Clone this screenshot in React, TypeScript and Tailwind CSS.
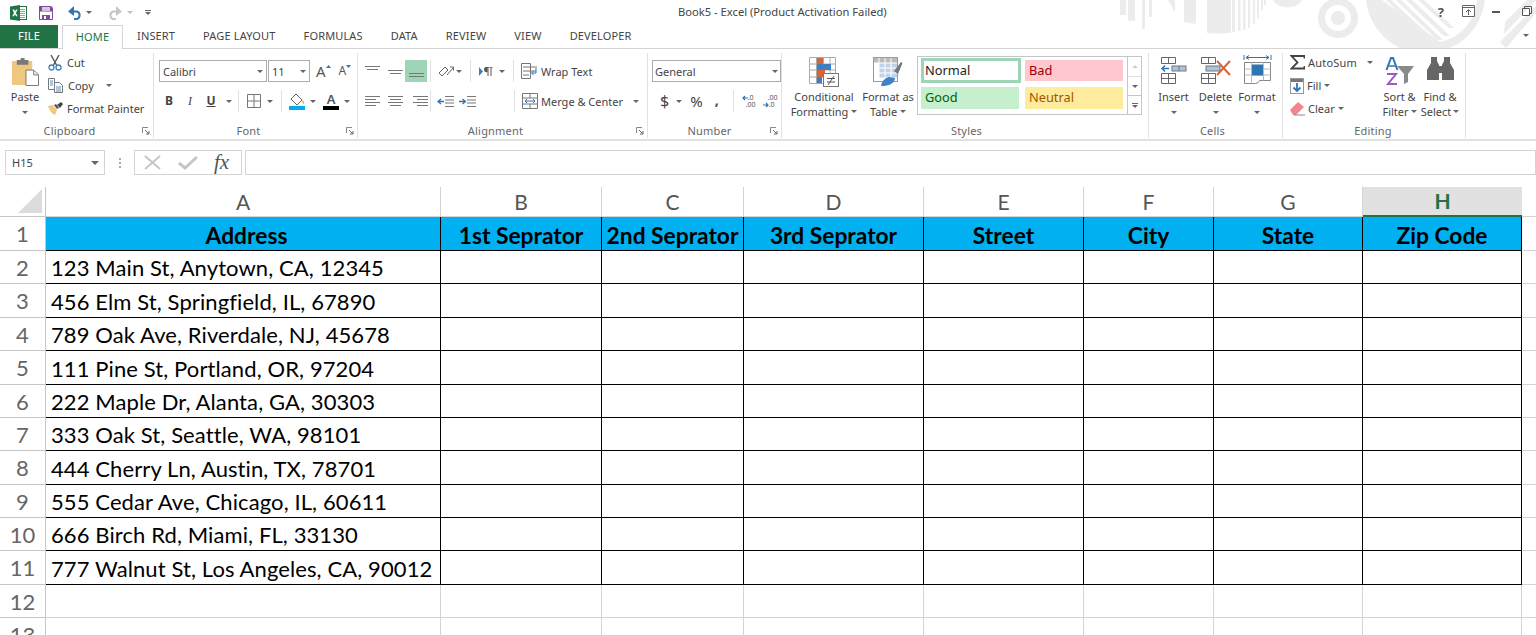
import type { ReactNode } from 'react';

const Caret = ({ className = '' }: { className?: string }) => (
  <svg viewBox="0 0 6 3" className={`w-[6px] h-[3px] shrink-0 ${className}`}>
    <path d="M0 0h6L3 3z" fill="#666" />
  </svg>
);

const Launcher = () => (
  <svg viewBox="0 0 8 8" className="w-[8px] h-[8px] absolute right-[3px] bottom-[3px]">
    <path d="M.5 6V.5H6" fill="none" stroke="#888" />
    <path d="M3 3l4 4M7 4v3H4" fill="none" stroke="#666" />
  </svg>
);

const Sep = () => <div className="w-px h-[22px] bg-[#e1e1e1] shrink-0" />;

const Group = ({ label, width, labelClass = '', launcher, children }: { label: string; width: string; labelClass?: string; launcher?: boolean; children: ReactNode }) => (
  <div className={`relative flex flex-col shrink-0 h-[85px] mt-[4px] border-r border-[#e1e1e1] ${width}`}>
    <div className="flex-1 min-h-0">{children}</div>
    <div className={`text-center text-[11px] leading-[14px] text-[#666] h-[14px] tracking-[0.2px] ${labelClass}`}>{label}</div>
    {launcher && <Launcher />}
  </div>
);

const ExcelLogo = () => (
  <svg viewBox="0 0 17 16" className="w-[17px] h-[16px]">
    <rect x="7" y="1.5" width="9.5" height="13" fill="#fff" stroke="#217346" />
    <path d="M9 4.5h6M9 6.5h6M9 8.5h6M9 10.5h6M9 12.5h6" stroke="#7fb595" />
    <path d="M0 1.5L10 0v16L0 14.5z" fill="#217346" />
    <path d="M2.5 4.5l1.4 3.4-1.6 3.4h1.6L5 9.2l1 2.1h1.7L5.9 7.9l1.7-3.4H6L5 6.6 4.2 4.5z" fill="#fff" />
  </svg>
);

const SaveIcon = () => (
  <svg viewBox="0 0 14 14" className="w-[14px] h-[14px]">
    <path d="M.5.5h11l2 2v11H.5z" fill="#fff" stroke="#7c4a9e" />
    <path d="M.5.5h13v5H.5z M3 1v3.5h8V1" fill="#7c4a9e" />
    <rect x="3" y="1" width="8" height="3.5" fill="#d9c8e5" />
    <rect x="3" y="9" width="8" height="5" fill="#7c4a9e" />
    <rect x="5" y="10" width="2" height="3" fill="#fff" />
  </svg>
);

const Undo = ({ color, flip }: { color: string; flip?: boolean }) => (
  <svg viewBox="0 0 15 14" className={`w-[15px] h-[14px] ${flip ? '-scale-x-100' : ''}`}>
    <path d="M2 5.500h7a4 4 0 0 1 0 7.500H6" fill="none" stroke={color} strokeWidth="2" />
    <path d="M6 0v10L0 5.500z" fill={color} />
  </svg>
);

const Pattern = () => (
  <svg viewBox="0 0 426 48" className="absolute left-[1110px] top-0 w-[426px] h-[48px]">
    <g fill="#ececec">
      <path d="M10 0h6v15h-6zM18 0h7v21h-7zM32 0h3v29h-3zM39 0h3v17h-3zM58 0h7v12zM74 0h12v24l-12-2zM97 0h21v33q-10 1-21 0zM118 0h3v33h-3z" />
      <path d="M122 0h3v32h-3zM128 0h2.500v31H128zM133 0h2.500v30H133zM138 0h2v28h-2zM143 0h2v24h-2zM147 0h2v18h-2zM151 0h2v10h-2zM154 0h2v5h-2z" />
      <path d="M163 0h29a15 10 0 0 1-29 0z" />
      <circle cx="228" cy="18" r="20" />
      <path d="M256 0a60 60 0 0 0 34 48h50a60 60 0 0 0 35-48h-8a46 46 0 0 1-37 42L272 0z" />
      <path d="M276 0h5l46 42h-8zM286 0h5l42 40h-6zM296 0h6l38 36h-6zM308 0h6l30 28h-5z" />
      <path d="M395 22l22-22h9L394 34zM390 42l36-36v7l-30 35z" />
    </g>
    <circle cx="228" cy="18" r="13" fill="#fff" />
    <circle cx="228" cy="18" r="7" fill="#ececec" />
  </svg>
);

const Cut = () => (
  <svg viewBox="0 0 14 16" className="w-[14px] h-[16px]">
    <path d="M3 0l5.500 10M11 0L5.500 10" stroke="#555" strokeWidth="1.400" fill="none" />
    <circle cx="3.500" cy="12.500" r="2.500" fill="none" stroke="#3f7fbf" strokeWidth="1.300" />
    <circle cx="10.500" cy="12.500" r="2.500" fill="none" stroke="#3f7fbf" strokeWidth="1.300" />
  </svg>
);

const Copy = () => (
  <svg viewBox="0 0 15 15" className="w-[15px] h-[15px]">
    <path d="M.5.5h6v11h-6z" fill="#fff" stroke="#777" />
    <path d="M6.500 4.500h5l3 3v7h-8z" fill="#fff" stroke="#777" />
    <path d="M8 9h5M8 11h5M8 13h5M2 3h3M2 5h3M2 7h3" stroke="#5b8fc7" />
  </svg>
);

const Painter = () => (
  <svg viewBox="0 0 15 13" className="w-[15px] h-[13px]">
    <path d="M0 4l5-1 4 5-2 5q-4-1-7-9z" fill="#efc77e" />
    <path d="M6 3l2-1 3 4-2 1z" fill="#555" />
    <path d="M9 3l4-3 2 2-3 4z" fill="#444" />
  </svg>
);

const Paste = () => (
  <svg viewBox="0 0 28 29" className="w-[27px] h-[28px]">
    <rect x="0" y="3" width="21" height="25" rx="1" fill="#efc77e" />
    <rect x="5" y="2" width="12" height="5" fill="#7a7a7a" />
    <rect x="9" y="0" width="4" height="3" fill="#7a7a7a" />
    <path d="M14.500 12.500h8l5 5v11h-13z" fill="#fff" stroke="#777" />
    <path d="M22.500 12.500v5h5" fill="none" stroke="#777" />
  </svg>
);

const Borders = () => (
  <svg viewBox="0 0 14 14" className="w-[14px] h-[14px]">
    <path d="M.5.5h13v13H.5zM7 .5v13M.5 7h13" fill="none" stroke="#777" />
  </svg>
);

const Fill = () => (
  <svg viewBox="0 0 16 17" className="w-[16px] h-[17px]">
    <path d="M7 1l6 6-5 5-6-6z" fill="#fff" stroke="#666" />
    <path d="M13 7q3 2 2 4-2-1-2-4z" fill="#e3a21a" />
    <rect x="0" y="13" width="16" height="4" fill="#00aeef" />
  </svg>
);

const AlignLines = ({ lines }: { lines: string }) => (
  <svg viewBox="0 0 15 13" className="w-[15px] h-[13px]">
    <path d={lines} stroke="#777" fill="none" />
  </svg>
);

const Orient = () => (
  <svg viewBox="0 0 16 14" className="w-[16px] h-[14px]">
    <path d="M1 9l6-6 3 3-6 6z" fill="none" stroke="#666" />
    <path d="M9 11l6-7M12 3h3.500v3.500" fill="none" stroke="#666" />
  </svg>
);

const Rtl = () => (
  <svg viewBox="0 0 15 9" className="w-[15px] h-[9px]">
    <path d="M0 0l4 4.500L0 9z" fill="#3f7fbf" />
    <path d="M6 0h8M8 0a2.500 2.500 0 0 0 0 5zM9 0v9M12 0v9" stroke="#555" fill="#555" />
  </svg>
);

const Wrap = () => (
  <svg viewBox="0 0 17 16" className="w-[17px] h-[16px]">
    <path d="M.5.500h9v15h-9z" fill="#fff" stroke="#777" />
    <path d="M2 4h14M2 8h13M2 12h6" stroke="#777" />
    <path d="M15 5v5h-4M12.500 8l-2 2 2 2" fill="none" stroke="#2f75b5" />
  </svg>
);

const Merge = () => (
  <svg viewBox="0 0 16 16" className="w-[16px] h-[16px]">
    <path d="M.5.500h15v15H.5zM.5 5h15M.5 11h15M8 .5V5M8 11v5" fill="#fff" stroke="#777" />
    <path d="M3 8h10M5 6l-2 2 2 2M11 6l2 2-2 2" fill="none" stroke="#2f75b5" />
  </svg>
);

const Indent = ({ right }: { right?: boolean }) => (
  <svg viewBox="0 0 17 11" className="w-[17px] h-[11px]">
    <path d="M8 .5h9M8 4h9M8 7h9M8 10.500h9" stroke="#777" />
    <path d={right ? 'M0 5.500h6M3.500 3L6.500 5.500 3.500 8' : 'M1 5.500h6M4 3L1 5.500 4 8'} fill="none" stroke="#2f75b5" strokeWidth="1.300" />
  </svg>
);

const Arrow = ({ right }: { right?: boolean }) => (
  <svg viewBox="0 0 6 6" className="w-[6px] h-[6px] shrink-0">
    <path d={right ? 'M0 3h5M3 1l2 2-2 2' : 'M6 3H1M3 1L1 3l2 2'} fill="none" stroke="#2f75b5" strokeWidth="1.200" />
  </svg>
);

const CondFormat = () => (
  <svg viewBox="0 0 30 30" className="w-[30px] h-[30px]">
    <path d="M.5.500h26v26H.5zM7.500 .5v26M14.500 .5v26M21 .5v26M.5 7h26M.5 13h26M.5 20h26" fill="#fff" stroke="#aaa" />
    <rect x="8" y="1" width="6" height="6" fill="#d9643a" />
    <rect x="8" y="7" width="14" height="6" fill="#3f7fbf" />
    <rect x="8" y="13" width="8" height="7" fill="#d9643a" />
    <rect x="8" y="20" width="5" height="6" fill="#3f7fbf" />
    <rect x="14.500" y="16.500" width="15" height="13" fill="#fff" stroke="#777" />
    <path d="M18 21.500h8M18 25h8M25 19l-6 9" stroke="#555" fill="none" />
  </svg>
);

const TableFormat = () => (
  <svg viewBox="0 0 30 30" className="w-[30px] h-[30px]">
    <rect x=".5" y=".5" width="24" height="24" fill="#fff" stroke="#999" />
    <rect x="1" y="1" width="23" height="5" fill="#bbb" />
    <rect x="6" y="6" width="18" height="15" fill="#c0d2e8" />
    <path d="M6 1v23M12 1v23M18 1v23M1 6h23M1 11h23M1 16h23M1 21h23" stroke="#fff" />
    <path d="M21 14l7-9 1.500 1L25 17z" fill="#777" />
    <path d="M8 29q1-7 8-9l6 1q-1 8-14 8z" fill="#3f83c6" />
  </svg>
);

const InsertIcon = () => (
  <svg viewBox="0 0 27 27" className="w-[27px] h-[27px]">
    <path d="M1.500.5h14v6h-14zM8.500 .5v6M1.500 16.500h14v10h-14zM1.500 21.500h14M8.500 16.500v10" fill="#fff" stroke="#666" />
    <rect x="12" y="9" width="14" height="5" fill="#a7c4e3" stroke="#777" />
    <path d="M19 9v5" stroke="#777" />
    <path d="M2 11.500h7M5 8.500l-3 3 3 3" fill="none" stroke="#2f75b5" strokeWidth="1.500" />
  </svg>
);

const DeleteIcon = () => (
  <svg viewBox="0 0 31 27" className="w-[31px] h-[27px]">
    <path d="M1.500.5h14v6h-14zM8.500 .5v6M1.500 16.500h14v10h-14zM1.500 21.500h14M8.500 16.500v10" fill="#fff" stroke="#666" />
    <rect x="6" y="9" width="14" height="5" fill="#a7c4e3" stroke="#777" />
    <path d="M17 4l13 14M30 4L17 18" stroke="#d9643a" strokeWidth="2" fill="none" />
  </svg>
);

const FormatIcon = () => (
  <svg viewBox="0 0 29 32" className="w-[29px] h-[32px]">
    <path d="M1 1v5M28 1v5" stroke="#2f75b5" />
    <path d="M3 3.500h23M6 1.500L3 3.500l3 2M23 1.500l3 2-3 2" fill="none" stroke="#2f75b5" />
    <path d="M1.500 8.500h26v18h-11q-1 3-4 3h-11z" fill="#fff" stroke="#888" />
    <path d="M8.500 8.500v21M20.500 8.500v18M1.500 15h26M1.500 21h26" stroke="#bbb" />
    <rect x="9" y="10.500" width="11" height="11" fill="#2f75b5" />
  </svg>
);

const Sigma = () => (
  <svg viewBox="0 0 15 15" className="w-[15px] h-[15px]">
    <path d="M14.500 3.500V1H1.500l6 6.500-6 6h13V11" fill="none" stroke="#444" strokeWidth="1.800" />
  </svg>
);

const FillDown = () => (
  <svg viewBox="0 0 14 16" className="w-[14px] h-[16px]">
    <rect x=".5" y=".5" width="13" height="15" fill="#fff" stroke="#999" />
    <rect x="1" y="1" width="12" height="3" fill="#777" />
    <path d="M7 5v8M3.500 9.500L7 13l3.500-3.500" fill="none" stroke="#2f75b5" strokeWidth="1.800" />
  </svg>
);

const Eraser = () => (
  <svg viewBox="0 0 15 15" className="w-[15px] h-[15px]">
    <path d="M0 9l8-8 6 5-8 8H3z" fill="#f0868e" />
    <path d="M4 14h11" stroke="#888" />
  </svg>
);

const SortIcon = () => (
  <svg viewBox="0 0 30 29" className="w-[30px] h-[29px]">
    <path d="M1.500 13L6 1h2l4.500 12" fill="none" stroke="#2f75b5" strokeWidth="2" />
    <path d="M4 9h6" stroke="#2f75b5" strokeWidth="1.500" />
    <path d="M2 17h9L3 27h9" fill="none" stroke="#9b59c4" strokeWidth="2" />
    <path d="M12 9h17l-6 8v8l-4 2V17z" fill="#8a8a8a" />
  </svg>
);

const FindIcon = () => (
  <svg viewBox="0 0 27 25" className="w-[27px] h-[25px]">
    <path d="M4 0h6v4l2 4v15H0V13l4-7zM17 0h6v6l4 7v10H15V8l2-4zM12 9h3v7h-3z" fill="#666" />
  </svg>
);

const TextItem = ({ children, className = '' }: { children: ReactNode; className?: string }) => (
  <span className={`text-[11px] leading-[15px] text-[#444] whitespace-nowrap ${className}`}>{children}</span>
);

const Ribbon = () => (
  <div className="flex h-[92px] border-b-2 border-[#e1e1e1]">
    <Group label="Clipboard" width="w-[154px]" labelClass="pr-[14px]" launcher>
      <div className="flex">
        <div className="flex flex-col items-center w-[48px] pl-[2px] pt-[5px]">
          <Paste />
          <TextItem className="mt-[3px]">Paste</TextItem>
          <Caret className="mt-[7px]" />
        </div>
        <div className="flex flex-col -mt-[2px]">
          <div className="flex items-center h-[23px] gap-[5px]"><Cut /><TextItem>Cut</TextItem></div>
          <div className="flex items-center h-[23px] gap-[5px]"><Copy /><TextItem>Copy</TextItem><Caret className="ml-[7px]" /></div>
          <div className="flex items-center h-[23px] gap-[4px]"><Painter /><TextItem>Format Painter</TextItem></div>
        </div>
      </div>
    </Group>

    <Group label="Font" width="w-[204px]" labelClass="pr-[14px]" launcher>
      <div className="flex flex-col pl-[5px] pt-[7px]">
        <div className="flex items-center h-[22px]">
          <div className="flex items-center justify-between w-[108px] h-[22px] border border-[#ababab] px-[3px]"><TextItem>Calibri</TextItem><Caret /></div>
          <div className="flex items-center justify-between w-[42px] h-[22px] border border-[#ababab] ml-[1px] px-[3px]"><TextItem>11</TextItem><Caret /></div>
          <span className="ml-[6px] text-[15px] leading-[20px] text-[#555]">A</span>
          <svg viewBox="0 0 5 3" className="w-[5px] h-[3px] self-start mt-[5px]"><path d="M0 3l2.500-3L5 3z" fill="#2f75b5" /></svg>
          <span className="ml-[8px] text-[12px] leading-[20px] text-[#555]">A</span>
          <svg viewBox="0 0 5 3" className="w-[5px] h-[3px] self-start mt-[5px]"><path d="M0 0l2.500 3L5 0z" fill="#2f75b5" /></svg>
        </div>
        <div className="flex items-center h-[22px] mt-[8px]">
          <span className="w-[20px] text-center text-[12px] font-bold text-[#444]">B</span>
          <span className="w-[22px] text-center text-[12px] italic text-[#444] font-['Liberation_Serif',serif]">I</span>
          <span className="w-[20px] text-center text-[12px] font-bold underline text-[#444]">U</span>
          <Caret className="ml-[5px]" />
          <div className="ml-[6px]"><Sep /></div>
          <div className="ml-[8px]"><Borders /></div>
          <Caret className="ml-[6px]" />
          <div className="ml-[8px]"><Sep /></div>
          <div className="ml-[7px]"><Fill /></div>
          <Caret className="ml-[5px]" />
          <div className="relative ml-[7px] w-[16px] h-[17px] text-center">
            <span className="block text-[13px] leading-[13px] font-semibold text-[#555]">A</span>
            <div className="h-[4px] bg-black" />
          </div>
          <Caret className="ml-[5px]" />
        </div>
      </div>
    </Group>

    <Group label="Alignment" width="w-[290px]" labelClass="pr-[14px]" launcher>
      <div className="flex flex-col pl-[7px] pt-[7px]">
        <div className="flex items-center h-[22px]">
          <div className="w-[23px]"><AlignLines lines="M0 1.500h15M2 4.500h11" /></div>
          <div className="w-[17px]"><AlignLines lines="M0 5.500h15M2 8.500h11" /></div>
          <div className="flex items-center justify-center w-[22px] h-[22px] bg-[#9fd5b7] mr-[3px]"><AlignLines lines="M0 8.500h15M0 11.500h15" /></div>
          <Sep />
          <div className="ml-[7px]"><Orient /></div>
          <Caret className="ml-[2px]" />
          <div className="ml-[8px]"><Sep /></div>
          <div className="ml-[8px]"><Rtl /></div>
          <Caret className="ml-[5px]" />
          <div className="ml-[8px]"><Sep /></div>
          <div className="flex items-center gap-[3px] ml-[7px]"><Wrap /><TextItem>Wrap Text</TextItem></div>
        </div>
        <div className="flex items-center h-[22px] mt-[8px]">
          <div className="w-[23px]"><AlignLines lines="M0 1.500h15M0 4.500h11M0 7.500h15M0 10.500h11" /></div>
          <div className="w-[25px]"><AlignLines lines="M0 1.500h15M2 4.500h11M0 7.500h15M2 10.500h11" /></div>
          <div className="w-[17px]"><AlignLines lines="M0 1.500h15M4 4.500h11M0 7.500h15M4 10.500h11" /></div>
          <Sep />
          <div className="ml-[6px]"><Indent /></div>
          <div className="ml-[5px]"><Indent right /></div>
          <div className="ml-[38px]"><Sep /></div>
          <div className="flex items-center gap-[3px] ml-[7px]"><Merge /><TextItem>Merge &amp; Center</TextItem></div>
          <Caret className="ml-[10px]" />
        </div>
      </div>
    </Group>

    <Group label="Number" width="w-[134px]" labelClass="pr-[10px]" launcher>
      <div className="flex flex-col pl-[4px] pt-[7px]">
        <div className="flex items-center justify-between w-[129px] h-[22px] border border-[#ababab] px-[2px]"><TextItem>General</TextItem><Caret /></div>
        <div className="flex items-center h-[22px] mt-[8px]">
          <span className="ml-[8px] text-[16px] text-[#444]">$</span>
          <Caret className="ml-[7px]" />
          <span className="ml-[8px] text-[15px] text-[#444]">%</span>
          <span className="ml-[12px] text-[14px] font-bold text-[#444] -mt-[4px]">,</span>
          <div className="ml-[14px]"><Sep /></div>
          <div className="flex flex-col w-[14px] ml-[8px] text-[7px] leading-[7px] text-[#555]">
            <div className="flex items-center"><Arrow /><span>.0</span></div>
            <span className="text-right">.00</span>
          </div>
          <div className="flex flex-col w-[15px] ml-[7px] text-[7px] leading-[7px] text-[#555]">
            <span className="text-right">.00</span>
            <div className="flex items-center"><Arrow right /><span>.0</span></div>
          </div>
        </div>
      </div>
    </Group>

    <Group label="Styles" width="w-[364px] ml-[3px]">
      <div className="flex">
        <div className="flex flex-col items-center w-[78px] pt-[4px]">
          <CondFormat />
          <TextItem className="mt-[2px]">Conditional</TextItem>
          <div className="flex items-center gap-[3px]"><TextItem>Formatting</TextItem><Caret /></div>
        </div>
        <div className="flex flex-col items-center w-[50px] pt-[4px]">
          <TableFormat />
          <TextItem className="mt-[2px]">Format as</TextItem>
          <div className="flex items-center gap-[3px]"><TextItem>Table</TextItem><Caret /></div>
        </div>
        <div className="flex w-[225px] h-[59px] mt-[3px] ml-[4px] border border-[#c6c6c6]">
          <div className="grid grid-cols-[98px_98px] grid-rows-[25px_22px] gap-x-[6px] gap-y-[4px] pl-[3px] pt-[1px] w-[210px]">
            <div className="flex items-center h-[25px] w-[100px] border-[3px] border-[#9fd5b7] pl-[1px] text-[12.800px] text-[#222]">Normal</div>
            <div className="flex items-center h-[21px] mt-[2px] bg-[#ffc7ce] pl-[4px] text-[12.800px] text-[#9c0006]">Bad</div>
            <div className="flex items-center h-[22px] bg-[#c6efce] pl-[4px] text-[12.800px] text-[#006100]">Good</div>
            <div className="flex items-center h-[22px] bg-[#ffeb9c] pl-[4px] text-[12.800px] text-[#9c5700]">Neutral</div>
          </div>
          <div className="flex flex-col w-[14px] ml-auto border-l border-[#c6c6c6]">
            <div className="flex items-center justify-center h-[20px] border-b border-[#e1e1e1]"><Caret className="rotate-180 opacity-30" /></div>
            <div className="flex items-center justify-center h-[19px] border-b border-[#c6c6c6]"><Caret /></div>
            <div className="flex flex-col items-center justify-center gap-[1px] flex-1"><div className="w-[6px] h-px bg-[#666]" /><Caret /></div>
          </div>
        </div>
      </div>
    </Group>

    <Group label="Cells" width="w-[134px]" labelClass="pr-[6px]">
      <div className="flex pl-[8px] pt-[1px]">
        <div className="flex flex-col items-center w-[33px]">
          <div className="h-[35px] pt-[3px]"><InsertIcon /></div>
          <TextItem>Insert</TextItem>
          <Caret className="mt-[7px]" />
        </div>
        <div className="flex flex-col items-center w-[41px] ml-[5px]">
          <div className="h-[35px] pt-[3px]"><DeleteIcon /></div>
          <TextItem>Delete</TextItem>
          <Caret className="mt-[7px]" />
        </div>
        <div className="flex flex-col items-center w-[42px]">
          <div className="h-[35px]"><FormatIcon /></div>
          <TextItem>Format</TextItem>
          <Caret className="mt-[7px]" />
        </div>
      </div>
    </Group>

    <Group label="Editing" width="w-[183px]" labelClass="pr-[2px]">
      <div className="flex pl-[7px]">
        <div className="flex flex-col w-[90px] -mt-[2px]">
          <div className="flex items-center h-[23px] gap-[3px]"><Sigma /><TextItem className="tracking-[0.2px]">AutoSum</TextItem><Caret className="ml-[7px]" /></div>
          <div className="flex items-center h-[23px] gap-[3px]"><FillDown /><TextItem>Fill</TextItem><Caret /></div>
          <div className="flex items-center h-[23px] gap-[3px]"><Eraser /><TextItem>Clear</TextItem><Caret /></div>
        </div>
        <div className="flex flex-col items-center w-[39px] pt-[4px]">
          <SortIcon />
          <TextItem className="mt-[3px]">Sort &amp;</TextItem>
          <div className="flex items-center gap-[2px]"><TextItem>Filter</TextItem><Caret /></div>
        </div>
        <div className="flex flex-col items-center w-[42px] pt-[4px]">
          <FindIcon />
          <TextItem className="mt-[7px]">Find &amp;</TextItem>
          <div className="flex items-center gap-[2px]"><TextItem>Select</TextItem><Caret /></div>
        </div>
      </div>
    </Group>
  </div>
);

const FormulaBar = () => (
  <div className="flex items-center h-[25px] mt-[9px] pl-[5px]">
    <div className="flex items-center justify-between w-[100px] h-[25px] border border-[#d4d4d4] pl-[6px] pr-[5px]">
      <TextItem>H15</TextItem>
      <Caret className="w-[8px] h-[4px]" />
    </div>
    <div className="flex flex-col items-center gap-[2px] w-[29px]">
      <div className="w-[2px] h-[2px] bg-[#aaa]" />
      <div className="w-[2px] h-[2px] bg-[#aaa]" />
      <div className="w-[2px] h-[2px] bg-[#aaa]" />
    </div>
    <div className="flex items-center w-[108px] h-[25px] border border-[#d4d4d4] pl-[9px]">
      <svg viewBox="0 0 17 15" className="w-[17px] h-[15px]"><path d="M1 1l15 13M16 1L1 14" stroke="#c6c6c6" strokeWidth="2" fill="none" /></svg>
      <svg viewBox="0 0 20 15" className="w-[20px] h-[15px] ml-[17px]"><path d="M1 8l6 5L19 2" stroke="#c6c6c6" strokeWidth="3" fill="none" /></svg>
      <span className="ml-[16px] text-[21px] leading-none italic text-[#555] font-['Liberation_Serif',serif]">fx</span>
    </div>
    <div className="flex-1 h-[25px] ml-[3px] border border-[#d4d4d4]" />
  </div>
);

const widths = ['w-[395px]', 'w-[161px]', 'w-[142px]', 'w-[180px]', 'w-[160px]', 'w-[130px]', 'w-[149px]', 'w-[159px]'];
const letters = ['A', 'B', 'C', 'D', 'E', 'F', 'G', 'H'];
const headers = ['Address', '1st Seprator', '2nd Seprator', '3rd Seprator', 'Street', 'City', 'State', 'Zip Code'];
const addresses = [
  '123 Main St, Anytown, CA, 12345',
  '456 Elm St, Springfield, IL, 67890',
  '789 Oak Ave, Riverdale, NJ, 45678',
  '111 Pine St, Portland, OR, 97204',
  '222 Maple Dr, Alanta, GA, 30303',
  '333 Oak St, Seattle, WA, 98101',
  '444 Cherry Ln, Austin, TX, 78701',
  '555 Cedar Ave, Chicago, IL, 60611',
  '666 Birch Rd, Miami, FL, 33130',
  '777 Walnut St, Los Angeles, CA, 90012',
];
const rowHeights = ['h-[33px]', 'h-[34px]', 'h-[33px]', 'h-[34px]', 'h-[33px]', 'h-[33px]', 'h-[34px]', 'h-[33px]', 'h-[33px]', 'h-[34px]'];

const RowNum = ({ n }: { n: number }) => (
  <div className="flex items-center justify-center w-[46px] shrink-0 border-r border-b border-[#c6c6c6] text-[22px] text-[#666]">{n}</div>
);

const Sheet = () => (
  <div className="mt-[12px] font-['Lato',sans-serif]">
    <div className="flex h-[30px]">
      <div className="flex items-end justify-end w-[46px] shrink-0 border-r border-b border-[#c6c6c6] pr-[3px] pb-[3px]">
        <svg viewBox="0 0 24 24" className="w-[24px] h-[24px]"><path d="M24 0v24H0z" fill="#dcdcdc" /></svg>
      </div>
      {letters.map((l, i) =>
        l === 'H' ? (
          <div key={l} className={`flex items-center justify-center shrink-0 bg-[#e1e1e1] border-b-2 border-[#217346] text-[21px] font-bold text-[#217346] ${widths[i]}`}>{l}</div>
        ) : (
          <div key={l} className={`flex items-center justify-center shrink-0 border-r border-b border-[#d4d4d4] text-[21px] text-[#555] ${widths[i]}`}>{l}</div>
        )
      )}
      <div className="flex-1 border-b border-[#d4d4d4]" />
    </div>
    <div className="flex h-[34px]">
      <RowNum n={1} />
      {headers.map((h, i) => (
        <div key={h} className={`flex items-center justify-center shrink-0 bg-[#00b0f0] border-r border-b border-black pt-[3px] text-[22.800px] leading-none font-bold text-black whitespace-nowrap ${i === 0 ? 'pl-[7px]' : ''} ${widths[i]}`}>{h}</div>
      ))}
      <div className="flex-1 border-b border-[#d4d4d4]" />
    </div>
    {addresses.map((a, r) => (
      <div key={a} className={`flex ${rowHeights[r]}`}>
        <RowNum n={r + 2} />
        {widths.map((w, i) => (
          <div key={w} className={`flex items-center shrink-0 border-r border-b border-black pt-[2px] text-[22px] tracking-[0.1px] leading-none text-black whitespace-nowrap pl-[5px] ${w}`}>{i === 0 ? a : ''}</div>
        ))}
        <div className="flex-1 border-b border-[#d4d4d4]" />
      </div>
    ))}
    {[12, 13].map((n) => (
      <div key={n} className="flex h-[33px]">
        <RowNum n={n} />
        {widths.map((w) => (
          <div key={w} className={`shrink-0 border-r border-b border-[#d4d4d4] ${w}`} />
        ))}
        <div className="flex-1 border-b border-[#d4d4d4]" />
      </div>
    ))}
  </div>
);

export default function App() {
  return (
    <div className="relative h-[635px] w-[1536px] overflow-hidden bg-white font-['Noto_Sans',sans-serif]">
      <Pattern />
      <div className="relative flex items-center h-[25px] pl-[10px]">
        <ExcelLogo />
        <div className="ml-[12px]"><SaveIcon /></div>
        <div className="ml-[15px]"><Undo color="#2f75b5" /></div>
        <Caret className="ml-[3px]" />
        <div className="ml-[15px]"><Undo color="#c6c6c6" flip /></div>
        <Caret className="ml-[5px] opacity-40" />
        <div className="flex flex-col items-center ml-[12px] gap-[1px]">
          <div className="w-[6px] h-px bg-[#666]" />
          <Caret />
        </div>
        <span className="ml-[527px] text-[11.200px] text-[#444] whitespace-nowrap">Book5 - Excel (Product Activation Failed)</span>
        <span className="ml-auto mr-[92px] text-[13px] font-bold text-[#555]">?</span>
        <svg viewBox="0 0 74 14" className="absolute left-[1462px] top-[4px] w-[74px] h-[14px]">
          <path d="M.5 1.500h12v11H.5zM.5 3.500h12M6.500 11V6M4 8l2.500-2.500L9 8" fill="none" stroke="#666" />
          <path d="M30 8h8" stroke="#555" strokeWidth="2" />
          <path d="M60.500 4.500h7v7h-7zM62.500 4.500v-2h7v7h-2" fill="none" stroke="#555" />
        </svg>
      </div>
      <div className="relative flex h-[24px] border-b border-[#d4d4d4] text-[11px] tracking-[0.15px] text-[#444]">
        <div className="flex items-center justify-center w-[58px] h-[23px] bg-[#217346] text-white">FILE</div>
        <div className="flex items-center justify-center w-[61px] h-[24px] ml-[4px] bg-white border border-b-0 border-[#d4d4d4] text-[#217346]">HOME</div>
        {['INSERT', 'PAGE LAYOUT', 'FORMULAS', 'DATA', 'REVIEW', 'VIEW', 'DEVELOPER'].map((t, i) => (
          <div key={t} className={`flex items-center h-[23px] whitespace-nowrap ${i === 0 ? 'ml-[14px]' : 'ml-[28px]'}`}>{t}</div>
        ))}
        <Caret className="absolute left-[1523px] top-[9px]" />
      </div>
      <Ribbon />
      <FormulaBar />
      <Sheet />
    </div>
  );
}
